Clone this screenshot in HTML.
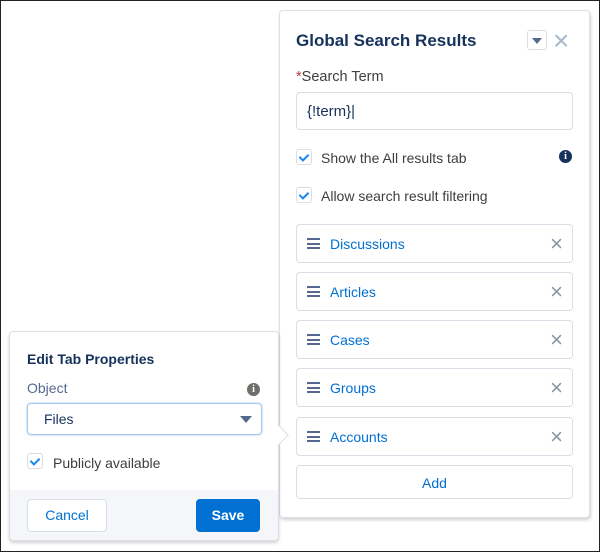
<!DOCTYPE html>
<html><head><style>
*{box-sizing:border-box;margin:0;padding:0}
body{width:600px;height:552px;background:#fff;font-family:"Liberation Sans",sans-serif;position:relative;overflow:hidden}
.frame{position:absolute;left:0;top:0;width:600px;height:552px;border:1px solid #222}
.panel{position:absolute;left:279px;top:10px;width:311px;height:508px;background:#fff;border:1px solid #dcdfe4;border-radius:4px;box-shadow:1px 2px 3px rgba(0,0,0,.18)}
.abs{position:absolute}
.title{left:296px;top:31px;font-size:17px;font-weight:bold;color:#16325c}
.lbl{font-size:14px;color:#3e3e3c}
.input{position:absolute;border:1px solid #d8dde6;border-radius:4px;background:#fff}
.cb{position:absolute;width:16px;height:16px;border:1px solid #d8dde6;border-radius:3px;background:#fff}
.cb::after{content:"";position:absolute;left:4px;top:2px;width:4px;height:7px;border:solid #1589ee;border-width:0 2px 2px 0;transform:rotate(45deg)}
.row{position:absolute;left:296px;width:277px;height:39px;border:1px solid #d8dde6;border-radius:4px;background:#fff}
.row .ham{position:absolute;left:10px;top:13px;width:13px;height:11px;border-top:2px solid #54698d;border-bottom:2px solid #54698d}
.row .ham::after{content:"";position:absolute;left:0;top:2.5px;width:13px;height:2px;background:#54698d}
.row .t{position:absolute;left:33px;top:11px;font-size:14px;color:#0070d2}
.row .x{position:absolute;right:9px;top:9px;font-size:22px;line-height:20px;color:#8a94a3}
.info{position:absolute;width:13px;height:13px;border-radius:50%;background:#16325c;color:#fff;font-size:10px;font-weight:bold;text-align:center;line-height:13px;font-family:"Liberation Serif",serif}
.pop{position:absolute;left:9px;top:331px;width:270px;height:210px;background:#fff;border:1px solid #dcdfe4;border-radius:4px;box-shadow:0 2px 3px rgba(0,0,0,.18)}
.foot{position:absolute;left:0;bottom:0;width:100%;height:50px;background:#f4f6f9;border-radius:0 0 4px 4px}
.btn{position:absolute;border-radius:4px;font-size:14px;text-align:center}
</style></head><body>
<div class="panel"></div>
<div class="abs title">Global Search Results</div>
<div class="abs" style="left:527px;top:30px;width:20px;height:20px;border:1px solid #d8dde6;border-radius:3px"><div style="position:absolute;left:4px;top:7px;border-left:5px solid transparent;border-right:5px solid transparent;border-top:6px solid #54698d"></div></div>
<div class="abs" style="left:553px;top:27px;font-size:28px;line-height:28px;color:#a8b7c7">×</div>
<div class="abs lbl" style="left:296px;top:69px;font-size:14.5px"><span style="color:#c23934">*</span>Search Term</div>
<div class="input" style="left:296px;top:92px;width:277px;height:38px"><span class="abs" style="left:10px;top:10px;font-size:15px;color:#16325c">{!term}|</span></div>
<div class="cb" style="left:296px;top:149px"></div>
<div class="abs lbl" style="left:321px;top:150px">Show the All results tab</div>
<div class="info" style="left:559px;top:150px">i</div>
<div class="cb" style="left:296px;top:187px"></div>
<div class="abs lbl" style="left:321px;top:188px">Allow search result filtering</div>
<div class="row" style="top:224px"><div class="ham"></div><div class="t">Discussions</div><div class="x">×</div></div>
<div class="row" style="top:272px"><div class="ham"></div><div class="t">Articles</div><div class="x">×</div></div>
<div class="row" style="top:320px"><div class="ham"></div><div class="t">Cases</div><div class="x">×</div></div>
<div class="row" style="top:368px"><div class="ham"></div><div class="t">Groups</div><div class="x">×</div></div>
<div class="row" style="top:417px"><div class="ham"></div><div class="t">Accounts</div><div class="x">×</div></div>
<div class="row" style="top:465px;height:34px"><div class="abs" style="left:0;width:100%;top:9px;text-align:center;font-size:14px;color:#0070d2">Add</div></div>
<div class="pop"><div class="foot"></div></div>
<div class="abs" style="left:279px;top:428px;width:14px;height:14px;background:#fff;transform:rotate(45deg);border-right:1px solid #dcdfe4;border-top:1px solid #dcdfe4;margin-left:-7px"></div>
<div class="abs" style="left:27px;top:351px;font-size:14px;font-weight:bold;color:#16325c">Edit Tab Properties</div>
<div class="abs lbl" style="left:27px;top:380px;color:#54698d">Object</div>
<div class="info" style="left:247px;top:383px;background:#706e6b">i</div>
<div class="input" style="left:27px;top:403px;width:235px;height:32px;border-color:#a5c8ee;box-shadow:0 0 2px #a5c8ee"><span class="abs" style="left:16px;top:7px;font-size:14px;color:#16325c">Files</span><div class="abs" style="left:212px;top:12px;border-left:6px solid transparent;border-right:6px solid transparent;border-top:7px solid #54698d"></div></div>
<div class="cb" style="left:27px;top:453px"></div>
<div class="abs lbl" style="left:53px;top:455px">Publicly available</div>
<div class="btn" style="left:27px;top:499px;width:80px;height:33px;border:1px solid #d8dde6;background:#fff;color:#0070d2;line-height:31px">Cancel</div>
<div class="btn" style="left:196px;top:499px;width:64px;height:33px;background:#0070d2;color:#fff;font-weight:bold;line-height:33px">Save</div>
<div class="frame"></div>
</body></html>
